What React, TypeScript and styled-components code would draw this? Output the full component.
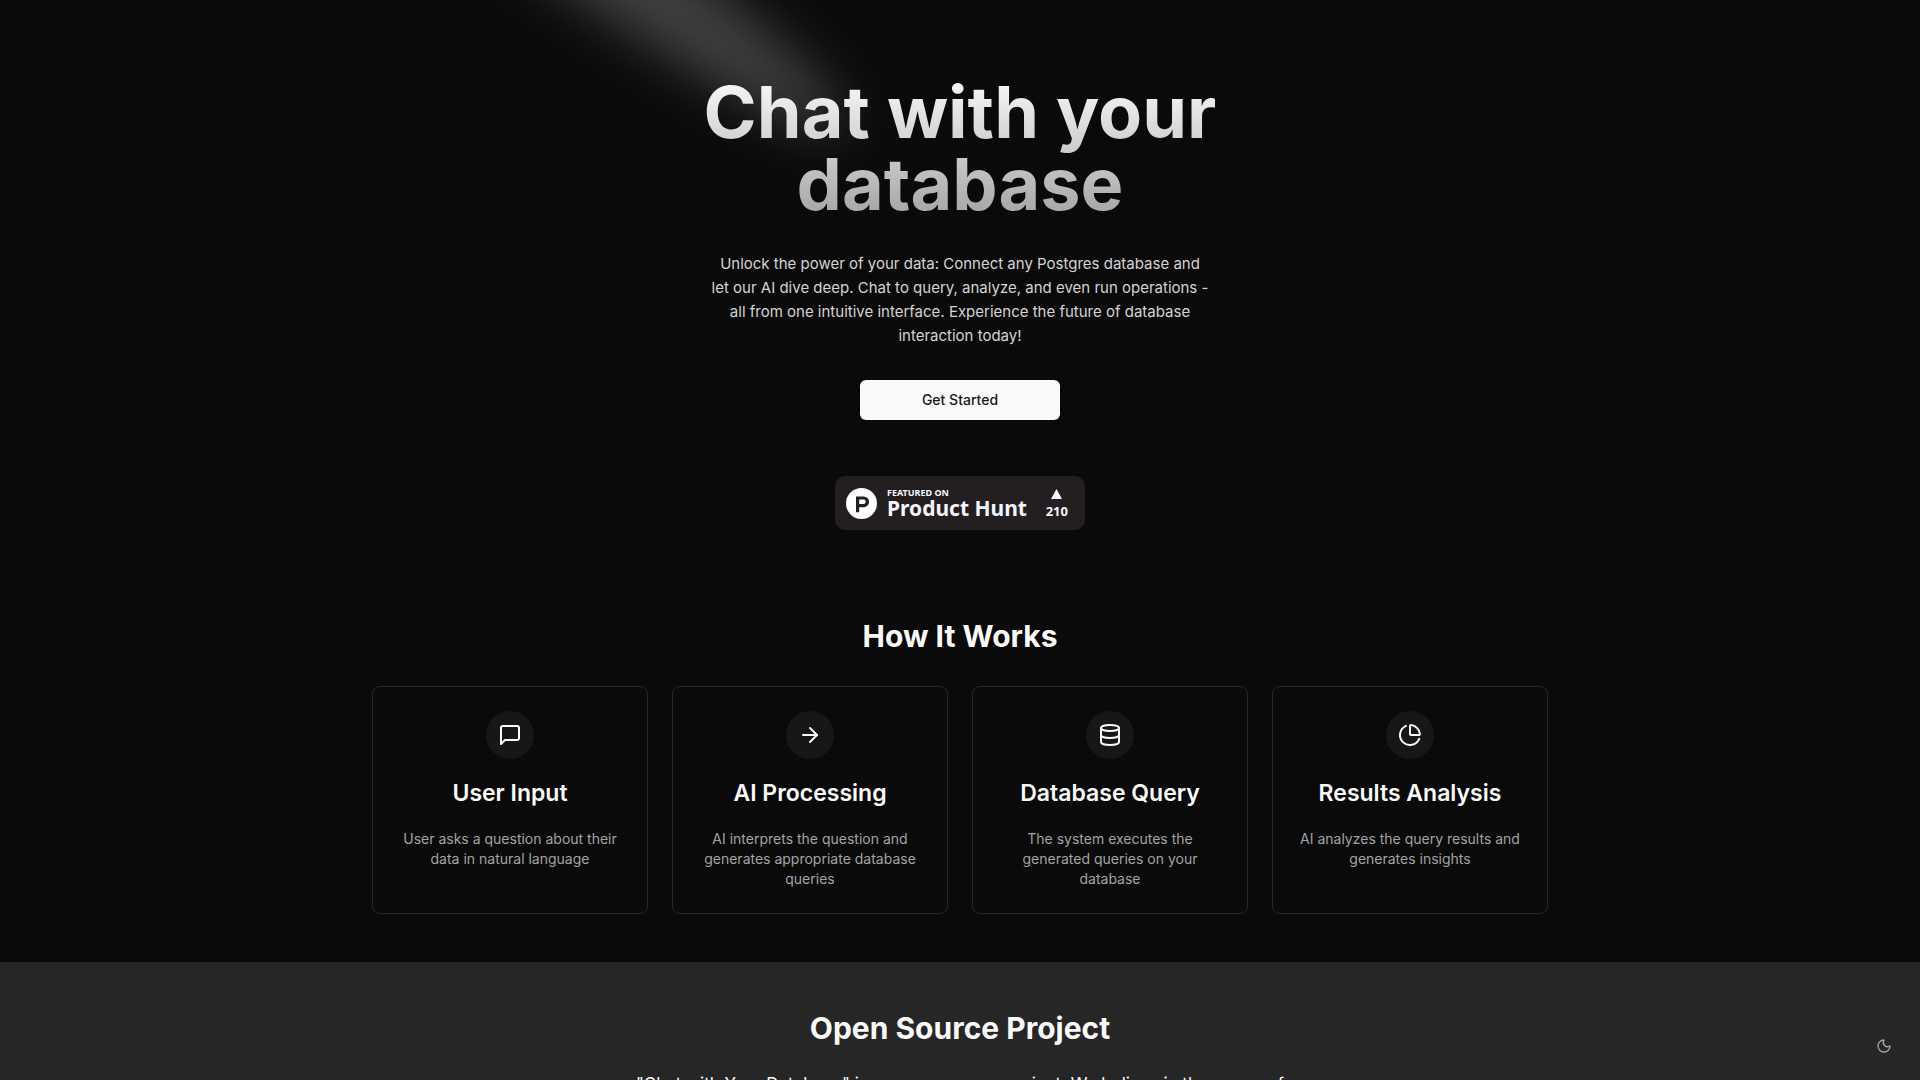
import React from "react";
import styled, { createGlobalStyle } from "styled-components";
import { ArrowRight, Database, MessageSquare, Moon, PieChart } from "lucide-react";

const GlobalStyle = createGlobalStyle`
  *, *::before, *::after { box-sizing: border-box; }
  body {
    margin: 0;
    background: #0a0a0a;
    color: #fafafa;
    font-family: Inter, "Liberation Sans", sans-serif;
    font-size: 16px;
    line-height: 24px;
    -webkit-font-smoothing: antialiased;
  }
  h1, h2, h3, p { margin: 0; }
`;

const Page = styled.div`
  position: relative;
  height: 100vh;
  overflow: hidden;
`;

const Spotlight = styled.svg`
  position: absolute;
  top: 0;
  left: 0;
  width: 1000px;
  height: 400px;
  pointer-events: none;
`;

const Hero = styled.section`
  position: relative;
  display: flex;
  flex-direction: column;
  align-items: center;
  width: 100%;
  max-width: 560px;
  margin: 0 auto;
  padding: 76px 16px 0;
  text-align: center;
`;

const Title = styled.h1`
  font-size: 72px;
  line-height: 72px;
  font-weight: 700;
  color: transparent;
  background: linear-gradient(to bottom, #fafafa, #a3a3a3);
  background-clip: text;
  -webkit-background-clip: text;
`;

const Lead = styled.p`
  margin-top: 32px;
  color: #d4d4d4;
  font-size: 15px;
  line-height: 24px;
`;

const StartButton = styled.button`
  width: 200px;
  height: 40px;
  margin-top: 32px;
  border: 0;
  border-radius: 6px;
  background: #fafafa;
  color: #171717;
  font: 500 14px/20px Inter, "Liberation Sans", sans-serif;
`;

const HuntLink = styled.a`
  display: flex;
  align-items: center;
  width: 250px;
  height: 54px;
  margin-top: 56px;
  padding: 0 17px 0 11px;
  border-radius: 10px;
  background: #231f20;
  color: #f5f5ff;
  font-family: "Noto Sans", sans-serif;
  font-weight: 700;
  text-decoration: none;
`;

const HuntText = styled.span`
  display: flex;
  flex-direction: column;
  flex: 1;
  margin-left: 10px;
  text-align: left;
`;

const HuntSmall = styled.span`
  font-size: 9px;
  line-height: 11px;
`;

const HuntName = styled.span`
  font-size: 21px;
  line-height: 21px;
  white-space: nowrap;
`;

const HuntVotes = styled.span`
  display: flex;
  flex-direction: column;
  align-items: center;
  gap: 4px;
  padding-top: 2px;
  font-size: 13px;
  line-height: 16px;
`;

const Works = styled.section`
  width: 100%;
  max-width: 1208px;
  margin: 0 auto;
  padding: 88px 16px 48px;
`;

const SectionTitle = styled.h2`
  font-size: 30px;
  line-height: 36px;
  font-weight: 700;
  text-align: center;
`;

const Cards = styled.div`
  display: grid;
  grid-template-columns: repeat(4, 1fr);
  gap: 24px;
  margin-top: 32px;
`;

const Card = styled.article`
  display: flex;
  flex-direction: column;
  align-items: center;
  padding: 24px;
  border: 1px solid #262626;
  border-radius: 8px;
  text-align: center;
`;

const IconDisc = styled.div`
  display: grid;
  place-items: center;
  width: 48px;
  height: 48px;
  border-radius: 50%;
  background: #171717;
`;

const CardTitle = styled.h3`
  margin-top: 16px;
  font-size: 23px;
  line-height: 36px;
  font-weight: 600;
  white-space: nowrap;
`;

const CardText = styled.p`
  margin-top: 18px;
  color: #a3a3a3;
  font-size: 14px;
  line-height: 20px;
`;

const OpenSource = styled.section`
  padding: 48px 16px;
  background: #262626;
  text-align: center;
`;

const OpenText = styled.p`
  max-width: 704px;
  margin: 24px auto 0;
  padding: 0 16px;
  font-size: 17px;
  line-height: 28px;
`;

const ThemeButton = styled.button`
  position: fixed;
  right: 16px;
  bottom: 14px;
  display: grid;
  place-items: center;
  width: 40px;
  height: 40px;
  padding: 0;
  border: 0;
  border-radius: 6px;
  background: transparent;
  color: #a3a3a3;
`;

const steps = [
  { icon: MessageSquare, title: "User Input", text: "User asks a question about their data in natural language" },
  { icon: ArrowRight, title: "AI Processing", text: "AI interprets the question and generates appropriate database queries" },
  { icon: Database, title: "Database Query", text: "The system executes the generated queries on your database" },
  { icon: PieChart, title: "Results Analysis", text: "AI analyzes the query results and generates insights" },
];

// Older, squarer outline of the chat bubble, with a short tail at the lower left.
const ChatBubble = () => (
  <svg
    width="24"
    height="24"
    viewBox="0 0 24 24"
    fill="none"
    stroke="currentColor"
    strokeWidth="2"
    strokeLinecap="round"
    strokeLinejoin="round"
    aria-hidden="true"
  >
    <path d="M21 15a2 2 0 0 1-2 2H7l-4 4V5a2 2 0 0 1 2-2h14a2 2 0 0 1 2 2z" />
  </svg>
);

export default function App() {
  return (
    <Page>
      <GlobalStyle />
      <Spotlight viewBox="0 0 1000 400" aria-hidden="true">
        <defs>
          <filter id="beam-blur" x="-50%" y="-200%" width="200%" height="500%">
            <feGaussianBlur stdDeviation="26" />
          </filter>
        </defs>
        <g filter="url(#beam-blur)">
          <ellipse cx="573" cy="-62" rx="330" ry="47" transform="rotate(35 573 -62)" fill="#fff" fillOpacity="0.22" />
        </g>
      </Spotlight>
      <main>
        <Hero>
          <Title>
            Chat with your
            <br />
            database
          </Title>
          <Lead>
            Unlock the power of your data: Connect any Postgres database and
            <br />
            let our AI dive deep. Chat to query, analyze, and even run operations -
            <br />
            all from one intuitive interface. Experience the future of database
            <br />
            interaction today!
          </Lead>
          <StartButton type="button">Get Started</StartButton>
          <HuntLink href="#product-hunt">
            <svg width="31" height="31" viewBox="0 0 31 31" aria-hidden="true">
              <circle cx="15.5" cy="15.5" r="15.5" fill="#fff" />
              <path
                fillRule="evenodd"
                fill="#231f20"
                d="M10 8.4h7.7a5.4 5.4 0 0 1 0 10.8h-4.5v5H10zM13.2 11.6v4.4h4.3a2.2 2.2 0 0 0 0-4.4z"
              />
            </svg>
            <HuntText>
              <HuntSmall>FEATURED ON</HuntSmall>
              <HuntName>Product Hunt</HuntName>
            </HuntText>
            <HuntVotes>
              <svg width="11" height="10" viewBox="0 0 11 10" aria-hidden="true">
                <path d="M5.5 0 11 10H0z" fill="#f5f5ff" />
              </svg>
              210
            </HuntVotes>
          </HuntLink>
        </Hero>
        <Works>
          <SectionTitle>How It Works</SectionTitle>
          <Cards>
            {steps.map(({ icon: Icon, title, text }) => (
              <Card key={title}>
                <IconDisc>{Icon === MessageSquare ? <ChatBubble /> : <Icon size={24} />}</IconDisc>
                <CardTitle>{title}</CardTitle>
                <CardText>{text}</CardText>
              </Card>
            ))}
          </Cards>
        </Works>
        <OpenSource>
          <SectionTitle>Open Source Project</SectionTitle>
          <OpenText>
            "Chat with Your Database" is an open-source project. We believe in the power of
          </OpenText>
        </OpenSource>
      </main>
      <ThemeButton type="button" aria-label="Toggle theme">
        <Moon size={16} />
      </ThemeButton>
    </Page>
  );
}
